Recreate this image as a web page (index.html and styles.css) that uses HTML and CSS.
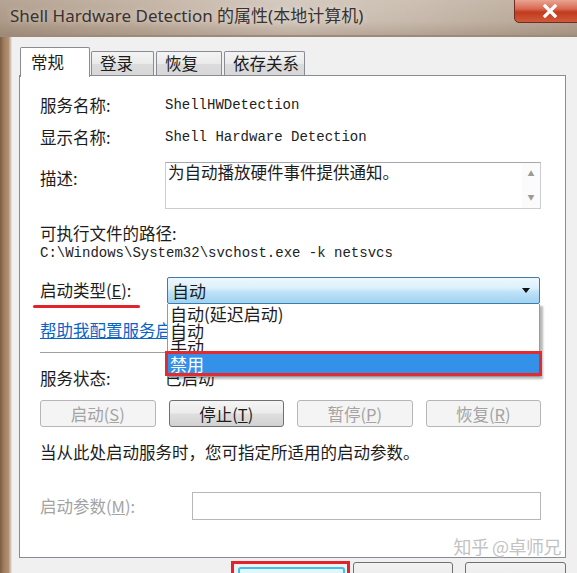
FILE: index.html
```html
<!DOCTYPE html>
<html lang="zh-CN">
<head>
<meta charset="utf-8">
<title>Shell Hardware Detection 的属性(本地计算机)</title>
<link rel="stylesheet" href="styles.css">
</head>
<body>
<div class="window">
  <header class="titlebar">
    <span class="title">Shell Hardware Detection 的属性(本地计算机)</span>
    <button class="close" aria-label="关闭">
      <svg width="16" height="14" viewBox="0 0 16 14"><path d="M3 2 L13 12 M13 2 L3 12" stroke="#fff" stroke-width="3.2" stroke-linecap="square"/></svg>
    </button>
  </header>
  <div class="frame">
    <div class="edge"></div>
    <div class="dialog">
      <nav class="tabs">
        <span class="tab active">常规</span>
        <span class="tab t2">登录</span>
        <span class="tab t3">恢复</span>
        <span class="tab t4">依存关系</span>
      </nav>
      <section class="panel">
        <div class="field f-name"><span class="label">服务名称:</span><span class="mono">ShellHWDetection</span></div>
        <div class="field f-display"><span class="label">显示名称:</span><span class="mono">Shell Hardware Detection</span></div>
        <div class="field f-desc">
          <span class="label">描述:</span>
          <div class="textbox">
            <span class="textbox-text">为自动播放硬件事件提供通知。</span>
            <span class="scroll"><span class="arrow">&#9650;</span><span class="arrow">&#9660;</span></span>
          </div>
        </div>
        <div class="line f-path">可执行文件的路径:</div>
        <div class="mono line">C:\Windows\System32\svchost.exe -k netsvcs</div>
        <div class="field f-start">
          <span class="label marked">启动类型(<u>E</u>):</span>
          <div class="select-wrap">
            <div class="select"><span>自动</span><span class="caret"></span></div>
            <ul class="options">
              <li>自动(延迟启动)</li>
              <li>自动</li>
              <li class="squeezed">手动</li>
              <li class="picked">禁用</li>
            </ul>
          </div>
        </div>
        <a class="link" href="#">帮助我配置服务启动选项。</a>
        <hr class="sep">
        <div class="field f-status"><span class="label">服务状态:</span><span>已启动</span></div>
        <div class="btn-row">
          <button class="btn" disabled>启动(<u>S</u>)</button>
          <button class="btn">停止(<u>T</u>)</button>
          <button class="btn" disabled>暂停(<u>P</u>)</button>
          <button class="btn" disabled>恢复(<u>R</u>)</button>
        </div>
        <div class="line note">当从此处启动服务时，您可指定所适用的启动参数。</div>
        <div class="field f-param">
          <span class="label dim">启动参数(<u>M</u>):</span>
          <div class="input"></div>
        </div>
        <span class="watermark">知乎 @卓师兄</span>
      </section>
      <footer class="footer">
        <span class="focus-box"><button class="fbtn ok">确定</button></span>
        <button class="fbtn cancel">取消</button>
        <button class="fbtn apply">应用(<u>A</u>)</button>
      </footer>
    </div>
  </div>
</div>
</body>
</html>
```

FILE: styles.css
```css
* { box-sizing: border-box; }

html, body {
  margin: 0;
  padding: 0;
}

body {
  width: 577px;
  height: 573px;
  overflow: hidden;
  background: #f0f0f0;
  font-family: "Noto Sans CJK SC", "Noto Sans", sans-serif;
  color: #1c1c1c;
}

.window {
  display: flex;
  flex-direction: column;
  height: 573px;
  overflow: hidden;
}

/* Aero title bar */
.titlebar {
  position: relative;
  height: 37px;
  flex: none;
  display: flex;
  align-items: flex-start;
  padding: 4px 0 0 10px;
  background:
    linear-gradient(180deg, rgba(255,255,255,0.10) 0%, rgba(255,255,255,0) 60%, rgba(90,60,40,0.18) 100%),
    linear-gradient(90deg, #ad9a88 0%, #bfae9e 25%, #d1c5b9 50%, #c8bbad 70%, #b5a392 100%);
  border-bottom: 2px solid #9c8a7b;
}

.title {
  font-family: "Noto Sans", "Noto Sans CJK SC", sans-serif;
  font-size: 17px;
  line-height: 24px;
  color: #3a3230;
  text-shadow: 0 0 6px rgba(255,255,255,0.55);
}

.close {
  position: absolute;
  top: -1px;
  left: 514px;
  width: 70px;
  height: 24px;
  border: 1px solid #6d2d22;
  border-radius: 0 0 0 5px;
  background: linear-gradient(180deg, #e9a493 0%, #d86a52 40%, #c23b1e 55%, #cf5a3a 100%);
  display: flex;
  align-items: center;
  justify-content: flex-start;
  padding: 0 0 0 27px;
}

.frame {
  flex: 1;
  min-height: 0;
  display: flex;
}

.edge {
  width: 12px;
  flex: none;
  background: linear-gradient(90deg, #7e5c42 0%, #a27f60 35%, #b18f70 70%, #d9cfc6 92%, #eeeae6 100%);
}

.dialog {
  flex: 1;
  display: flex;
  flex-direction: column;
  padding: 10px 0 0 7px;
}

/* Tabs */
.tabs {
  display: flex;
  align-items: flex-end;
  height: 28px;
  margin-left: 1px;
  position: relative;
  z-index: 2;
}

.tab {
  height: 24px;
  font-size: 16.5px;
  line-height: 22px;
  padding-left: 8px;
  border: 1px solid #898c95;
  border-bottom: none;
  background: linear-gradient(180deg, #f4f4f4 0%, #eaeaea 50%, #dcdcdc 51%, #d7d7d7 100%);
  border-radius: 2px 2px 0 0;
  white-space: nowrap;
}

.tab.active {
  width: 70px;
  height: 30px;
  margin-bottom: -2px;
  padding-left: 10px;
  line-height: 28px;
  background: #fff;
}

.tab.t2 { width: 63px; margin-left: 1px; }
.tab.t3 { width: 66px; margin-left: 2px; }
.tab.t4 { width: 81px; margin-left: 2px; }

/* Tab page */
.panel {
  position: relative;
  height: 483px;
  flex: none;
  margin-right: 11px;
  border: 1px solid #898c95;
  background: #fff;
  padding: 19px 24px 0 20px;
  font-size: 16.5px;
}

.field {
  display: grid;
  grid-template-columns: 125px 1fr;
  line-height: 20px;
}

.line { line-height: 20px; }

.mono {
  font-family: "Liberation Mono", "DejaVu Sans Mono", monospace;
  font-size: 14px;
  color: #222;
}

.f-display { margin-top: 12px; }

.f-desc { margin-top: 15px; }
.f-desc .label { padding-top: 6px; }

.textbox {
  position: relative;
  height: 47px;
  border: 1px solid #c9ccd2;
  border-top-color: #a4a7ad;
  display: flex;
  justify-content: space-between;
}

.textbox-text {
  padding: 0 0 0 2px;
  line-height: 18px;
}

.scroll {
  width: 18px;
  display: flex;
  flex-direction: column;
  justify-content: space-between;
  align-items: center;
  padding: 6px 0 6px;
  background: #fbfbfb;
}

.arrow {
  font-size: 7px;
  line-height: 9px;
  color: #9a9a9a;
}

.f-path { margin-top: 14px; }

.f-start { margin-top: 14px; }
.f-start .label { line-height: 27px; }

.marked { position: relative; }
.marked::after {
  content: "";
  position: absolute;
  left: -7px;
  top: 28px;
  width: 107px;
  height: 3px;
  border-radius: 2px;
  background: #e3232b;
}

.select-wrap {
  position: relative;
  margin-left: 2px;
  margin-right: 1px;
}

.select {
  height: 27px;
  border: 1px solid #3d7bad;
  border-radius: 2px;
  background: linear-gradient(180deg, #eef7fd 0%, #dcf0fc 40%, #bfe3f8 55%, #9fd2f1 100%);
  display: flex;
  align-items: center;
  justify-content: space-between;
  padding: 0 9px 0 4px;
  font-size: 17px;
}

.caret {
  width: 0;
  height: 0;
  border-left: 4px solid transparent;
  border-right: 4px solid transparent;
  border-top: 5px solid #111;
}

.options {
  position: absolute;
  top: 27px;
  left: 0;
  right: 0;
  height: 73px;
  margin: 0;
  padding: 1px 0 0;
  list-style: none;
  background: #fff;
  border: 1px solid #9a9a9a;
  border-top: none;
  box-shadow: 3px 2px 2px rgba(0,0,0,0.28);
  z-index: 5;
  font-size: 17px;
}

.options li {
  line-height: 17px;
  padding-left: 2px;
}

.options li.squeezed { line-height: 15px; overflow: hidden; height: 15px; }

.options li.picked {
  height: 19px;
  line-height: 19px;
  background: #3391ea;
  color: #fff;
  outline: 3px solid #e22a30;
  outline-offset: 0;
}

.link {
  display: block;
  margin-top: 16px;
  line-height: 20px;
  color: #0a64c8;
  text-decoration: underline;
  white-space: nowrap;
}

.sep {
  margin: 12px 0 0;
  height: 2px;
  border: none;
  border-top: 1px solid #a0a0a0;
  border-bottom: 1px solid #fff;
}

.f-status { margin-top: 14px; }

/* Service control buttons */
.btn-row {
  display: grid;
  grid-template-columns: repeat(4, 1fr);
  column-gap: 13px;
  margin-top: 12px;
}

.btn {
  height: 27px;
  font-family: inherit;
  font-size: 16.5px;
  line-height: 20px;
  padding: 0;
  border: 1px solid #707070;
  border-radius: 3px;
  color: #1c1c1c;
  background: linear-gradient(180deg, #f4f4f4 0%, #ececec 48%, #dedede 52%, #d2d2d2 100%);
}

.btn:disabled {
  border-color: #b4b6b8;
  color: #a3a3a3;
  background: #f4f4f4;
}

.note { margin-top: 15px; }

.f-param {
  grid-template-columns: 152px 1fr;
  align-items: center;
  margin-top: 30px;
}

.dim { color: #a3a3a3; }

.input {
  height: 28px;
  border: 1px solid #b7b7b7;
  background: #fff;
}

.watermark {
  position: absolute;
  right: 4px;
  bottom: 0;
  font-size: 18px;
  line-height: 22px;
  color: #c3c3c3;
  text-shadow: 0 0 2px #fff;
  letter-spacing: -0.5px;
}

/* Dialog buttons: only their top edge shows above the window's lower edge */
.footer {
  display: flex;
  align-items: flex-start;
  height: 16px;
  overflow: hidden;
  padding: 3px 11px 0 0;
  margin-left: 212px;
}

.focus-box {
  display: block;
  flex: none;
  border: 3px solid #e3232b;
  padding: 3px 2px 0 4px;
}

.fbtn {
  flex: none;
  height: 40px;
  font-family: inherit;
  font-size: 16px;
  border: 1px solid #707070;
  border-radius: 3px;
  background: linear-gradient(180deg, #f2f2f2, #e2e2e2);
  padding: 14px 0 0;
}

.fbtn.ok {
  width: 107px;
  border: 2px solid #3cc3e6;
  background: linear-gradient(180deg, #e4f6fc, #bfe8f7);
}

.fbtn.cancel { width: 100px; margin: 1px 0 0 3px; }
.fbtn.apply { width: 101px; margin: 1px 0 0 12px; }
```
